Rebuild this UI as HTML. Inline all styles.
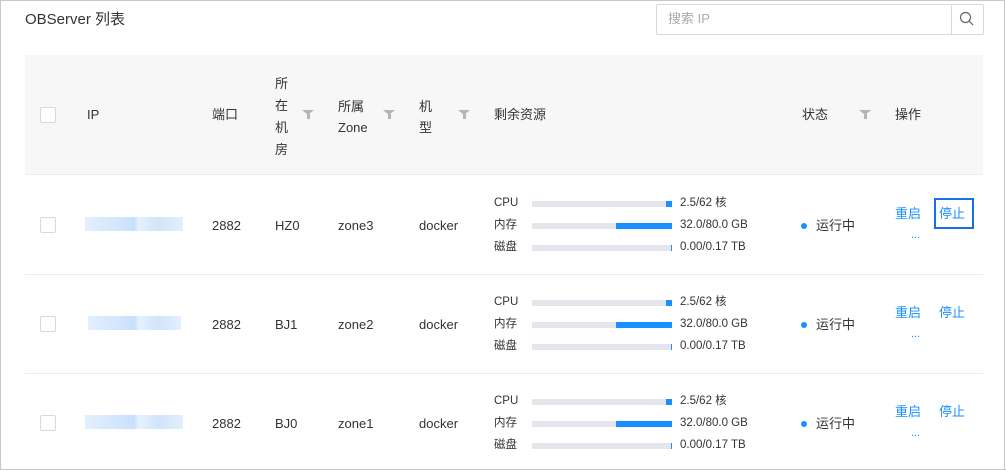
<!DOCTYPE html>
<html><head><meta charset="utf-8"><style>
*{margin:0;padding:0;box-sizing:border-box}
body{width:1006px;height:471px;overflow:hidden;background:#fff;font-family:"Liberation Sans","Noto Sans CJK SC",sans-serif;color:#333;position:relative}
.frame{position:absolute;left:0;top:0;width:1005px;height:470px;border:1px solid #c8c8c8}
.a{position:absolute;white-space:nowrap}
.t{font-size:13px;line-height:16px}
.cb{position:absolute;width:16px;height:16px;border:1px solid #d9d9d9;border-radius:2px;background:#fff}
.hdr{position:absolute;left:25px;top:55px;width:958px;height:120px;background:#f7f7f7;border-bottom:1px solid #ececec}
.line{position:absolute;left:25px;width:958px;height:1px;background:#ececec}
.f{position:absolute;width:0;height:0;border-left:6px solid transparent;border-right:6px solid transparent;border-top:5px solid #b5b5b5}
.f:after{content:"";position:absolute;left:-1px;top:-1px;width:3px;height:5px;background:#b5b5b5}
.ip{position:absolute;height:14px;background:linear-gradient(90deg,#e3effd,#d5e7fd 30%,#c8e0fc 50%,#e6f1fe 55%,#d0e4fc 75%,#e3effd)}
.bar{position:absolute;left:532px;width:140px;height:6px;background:#e3e6ea}
.bar i{position:absolute;right:0;top:0;height:6px;background:#1890ff}
.s{font-size:11.5px;line-height:13px;color:#333}
.blue{color:#1890ff}
.dot{position:absolute;width:6px;height:6px;border-radius:50%;background:#1890ff}
.more{position:absolute;font-size:11px;line-height:8px;color:#1890ff;letter-spacing:0px}
</style></head><body>
<div class="frame"></div>
<div class="a" style="left:25px;top:11px;font-size:15px;line-height:18px;color:#333">OBServer 列表</div>
<div class="a" style="left:656px;top:4px;width:328px;height:31px;border:1px solid #d9d9d9;border-radius:2px"></div>
<div class="a" style="left:951px;top:4px;width:1px;height:31px;background:#d9d9d9"></div>
<div class="a t" style="left:668px;top:11px;color:#aaa">搜索 IP</div>
<svg class="a" style="left:959px;top:11px" width="16" height="16" viewBox="0 0 16 16"><circle cx="6.5" cy="6.5" r="5" fill="none" stroke="#666" stroke-width="1.2"/><line x1="10.2" y1="10.2" x2="14" y2="14" stroke="#666" stroke-width="1.2"/></svg>

<div class="hdr"></div>
<div class="cb" style="left:40px;top:107px"></div>
<div class="a t" style="left:87px;top:107px">IP</div>
<div class="a t" style="left:212px;top:107px">端口</div>
<div class="a t" style="left:275px;top:73px;line-height:22px;white-space:normal;width:14px">所在机房</div>
<div class="f" style="left:302px;top:110px"></div>
<div class="a t" style="left:338px;top:96px;line-height:21px">所属<br>Zone</div>
<div class="f" style="left:383px;top:110px"></div>
<div class="a t" style="left:419px;top:96px;line-height:21px">机<br>型</div>
<div class="f" style="left:458px;top:110px"></div>
<div class="a t" style="left:494px;top:107px">剩余资源</div>
<div class="a t" style="left:802px;top:107px">状态</div>
<div class="f" style="left:859px;top:110px"></div>
<div class="a t" style="left:895px;top:107px">操作</div>

<div class="line" style="top:274px"></div>
<div class="line" style="top:373px"></div>
<div class="a" style="left:0;top:469px;width:1006px;height:1px;background:#c8c8c8"></div>

<div class="cb" style="left:40px;top:217px"></div>
<div class="ip" style="left:85px;top:217px;width:98px"></div>
<div class="a t" style="left:212px;top:218px">2882</div>
<div class="a t" style="left:275px;top:218px">HZ0</div>
<div class="a t" style="left:338px;top:218px">zone3</div>
<div class="a t" style="left:419px;top:218px">docker</div>
<div class="a s" style="left:494px;top:197px">CPU</div><div class="bar" style="top:201px"><i style="width:6px"></i></div><div class="a s" style="left:680px;top:197px">2.5/62 核</div>
<div class="a s" style="left:494px;top:219px">内存</div><div class="bar" style="top:223px"><i style="width:56px"></i></div><div class="a s" style="left:680px;top:219px">32.0/80.0 GB</div>
<div class="a s" style="left:494px;top:241px">磁盘</div><div class="bar" style="top:245px"><i style="width:1px"></i></div><div class="a s" style="left:680px;top:241px">0.00/0.17 TB</div>
<div class="dot" style="left:801px;top:223px"></div>
<div class="a t" style="left:816px;top:218px">运行中</div>
<div class="a t blue" style="left:895px;top:206px">重启</div>
<div class="more" style="left:911px;top:231px">...</div>
<div class="a" style="left:934px;top:198px;width:40px;height:31px;border:2px solid #1870e8"></div>
<div class="a t blue" style="left:939px;top:206px">停止</div>

<div class="cb" style="left:40px;top:316px"></div>
<div class="ip" style="left:88px;top:316px;width:93px"></div>
<div class="a t" style="left:212px;top:317px">2882</div>
<div class="a t" style="left:275px;top:317px">BJ1</div>
<div class="a t" style="left:338px;top:317px">zone2</div>
<div class="a t" style="left:419px;top:317px">docker</div>
<div class="a s" style="left:494px;top:296px">CPU</div><div class="bar" style="top:300px"><i style="width:6px"></i></div><div class="a s" style="left:680px;top:296px">2.5/62 核</div>
<div class="a s" style="left:494px;top:318px">内存</div><div class="bar" style="top:322px"><i style="width:56px"></i></div><div class="a s" style="left:680px;top:318px">32.0/80.0 GB</div>
<div class="a s" style="left:494px;top:340px">磁盘</div><div class="bar" style="top:344px"><i style="width:1px"></i></div><div class="a s" style="left:680px;top:340px">0.00/0.17 TB</div>
<div class="dot" style="left:801px;top:322px"></div>
<div class="a t" style="left:816px;top:317px">运行中</div>
<div class="a t blue" style="left:895px;top:305px">重启</div>
<div class="more" style="left:911px;top:330px">...</div>
<div class="a t blue" style="left:939px;top:305px">停止</div>

<div class="cb" style="left:40px;top:415px"></div>
<div class="ip" style="left:85px;top:415px;width:98px"></div>
<div class="a t" style="left:212px;top:416px">2882</div>
<div class="a t" style="left:275px;top:416px">BJ0</div>
<div class="a t" style="left:338px;top:416px">zone1</div>
<div class="a t" style="left:419px;top:416px">docker</div>
<div class="a s" style="left:494px;top:395px">CPU</div><div class="bar" style="top:399px"><i style="width:6px"></i></div><div class="a s" style="left:680px;top:395px">2.5/62 核</div>
<div class="a s" style="left:494px;top:417px">内存</div><div class="bar" style="top:421px"><i style="width:56px"></i></div><div class="a s" style="left:680px;top:417px">32.0/80.0 GB</div>
<div class="a s" style="left:494px;top:439px">磁盘</div><div class="bar" style="top:443px"><i style="width:1px"></i></div><div class="a s" style="left:680px;top:439px">0.00/0.17 TB</div>
<div class="dot" style="left:801px;top:421px"></div>
<div class="a t" style="left:816px;top:416px">运行中</div>
<div class="a t blue" style="left:895px;top:404px">重启</div>
<div class="more" style="left:911px;top:429px">...</div>
<div class="a t blue" style="left:939px;top:404px">停止</div>
</body></html>
